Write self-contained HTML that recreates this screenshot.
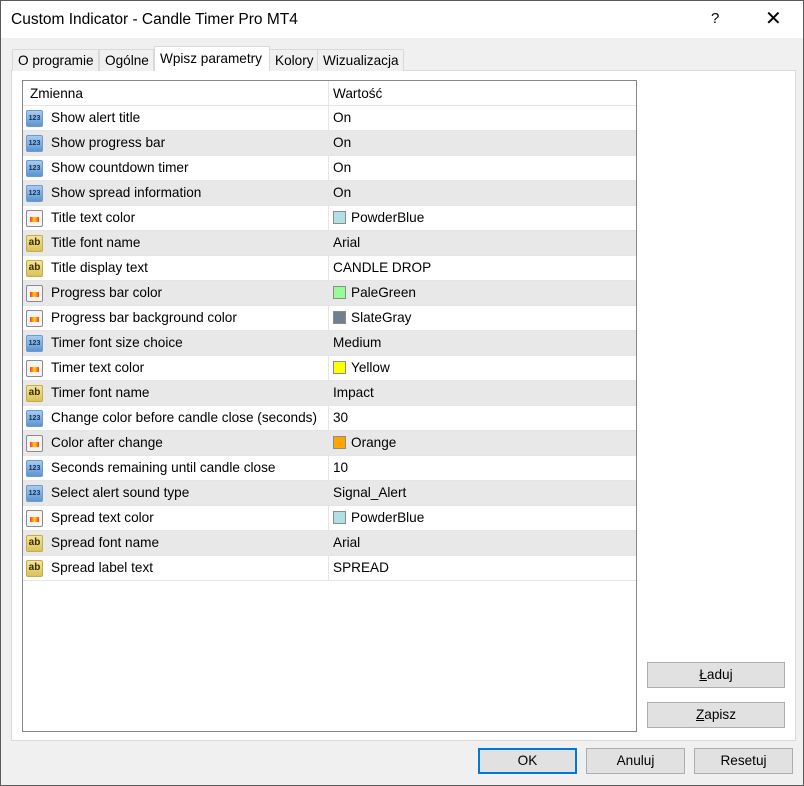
<!DOCTYPE html>
<html><head><meta charset="utf-8"><style>
*{box-sizing:border-box;margin:0;padding:0}
body{width:804px;height:786px;font-family:"Liberation Sans",Arial,sans-serif;font-size:13.6px;color:#000;background:#f0f0f0;position:relative;overflow:hidden}
.win{position:absolute;left:0;top:0;width:804px;height:786px;border:1px solid #5a5a5a;background:#f0f0f0}
.title{position:absolute;left:0;top:0;width:802px;height:37px;background:#fff}
.title .t{position:absolute;left:10px;top:10px;font-size:15.5px}
.title .q{position:absolute;left:710px;top:9px;font-size:15px}
.title .x{position:absolute;left:764px;top:5px;font-size:20px;font-weight:normal}
.tab{position:absolute;top:48px;height:22px;border:1px solid #d9d9d9;border-bottom:none;background:#f0f0f0;padding:3px 0 0 5px;font-size:13.6px}
.tab.sel{top:45px;height:25px;background:#fff;border-color:#d9d9d9;z-index:2;padding-top:4px}
.panel{position:absolute;left:10px;top:69px;width:785px;height:671px;background:#fff;border:1px solid #d9d9d9}
.list{position:absolute;left:21px;top:79px;width:615px;height:652px;border:1px solid #828790;background:#fff}
.hdr{position:absolute;left:0;top:0;width:613px;height:25px;border-bottom:1px solid #e5e5e5}
.hdr span{position:absolute;top:5px}
.vline{position:absolute;left:305px;top:0;width:1px;height:500px;background:#e5e5e5}
.row{position:absolute;left:0;width:613px;height:25px;border-bottom:1px solid #e5e5e5}
.row.g{background:#e8e8e8}
.row .nm{position:absolute;left:28px;top:4px}
.row .v{position:absolute;left:310px;top:4px}
.row .sw{display:inline-block;width:13px;height:13px;border:1px solid #8c8c8c;vertical-align:-2px;margin-right:5px}
.ic{position:absolute;left:3px;top:4px;width:17px;height:17px;border-radius:2px;font-size:7px;font-weight:bold;text-align:center;line-height:15px}
.ic.num{background:linear-gradient(#a8cbee,#5c95d0);border:1px solid #6b9bcf;color:#10305a}
.ic.ab{background:linear-gradient(#f3e59a,#d9c25a);border:1px solid #c4ad4a;color:#3a2a00;font-size:10px;line-height:14px}
.ic.col{background:#f4f4f4;border:1px solid #8c8c8c}
.ic.col:after{content:"";position:absolute;left:3px;top:6px;width:9px;height:5px;background:linear-gradient(90deg,#f33,#fd0 50%,#f33)}
.btn{position:absolute;height:26px;background:#e1e1e1;border:1px solid #adadad;text-align:center;line-height:24px;font-size:13.6px}
.btn.ok{border:2px solid #0078d7;line-height:22px}
</style></head><body><div class="win">
<div class="title"><span class="t">Custom Indicator - Candle Timer Pro MT4</span><span class="q">?</span><span class="x">✕</span></div>
<div class="panel"></div>
<div class="tab" style="left:11px;width:87px">O programie</div>
<div class="tab" style="left:98px;width:55px">Ogólne</div>
<div class="tab sel" style="left:153px;width:116px">Wpisz parametry</div>
<div class="tab" style="left:268px;width:49px">Kolory</div>
<div class="tab" style="left:316px;width:87px">Wizualizacja</div>
<div class="list">
<div class="hdr"><span style="left:7px">Zmienna</span><span style="left:310px">Wartość</span></div>
<div class="vline"></div>
<div class="row" style="top:25px"><span class="ic num">123</span><span class="nm">Show alert title</span><span class="v">On</span></div>
<div class="row g" style="top:50px"><span class="ic num">123</span><span class="nm">Show progress bar</span><span class="v">On</span></div>
<div class="row" style="top:75px"><span class="ic num">123</span><span class="nm">Show countdown timer</span><span class="v">On</span></div>
<div class="row g" style="top:100px"><span class="ic num">123</span><span class="nm">Show spread information</span><span class="v">On</span></div>
<div class="row" style="top:125px"><span class="ic col"></span><span class="nm">Title text color</span><span class="v"><span class="sw" style="background:#b0e0e6"></span>PowderBlue</span></div>
<div class="row g" style="top:150px"><span class="ic ab">ab</span><span class="nm">Title font name</span><span class="v">Arial</span></div>
<div class="row" style="top:175px"><span class="ic ab">ab</span><span class="nm">Title display text</span><span class="v">CANDLE DROP</span></div>
<div class="row g" style="top:200px"><span class="ic col"></span><span class="nm">Progress bar color</span><span class="v"><span class="sw" style="background:#98fb98"></span>PaleGreen</span></div>
<div class="row" style="top:225px"><span class="ic col"></span><span class="nm">Progress bar background color</span><span class="v"><span class="sw" style="background:#708090"></span>SlateGray</span></div>
<div class="row g" style="top:250px"><span class="ic num">123</span><span class="nm">Timer font size choice</span><span class="v">Medium</span></div>
<div class="row" style="top:275px"><span class="ic col"></span><span class="nm">Timer text color</span><span class="v"><span class="sw" style="background:#ffff00"></span>Yellow</span></div>
<div class="row g" style="top:300px"><span class="ic ab">ab</span><span class="nm">Timer font name</span><span class="v">Impact</span></div>
<div class="row" style="top:325px"><span class="ic num">123</span><span class="nm">Change color before candle close (seconds)</span><span class="v">30</span></div>
<div class="row g" style="top:350px"><span class="ic col"></span><span class="nm">Color after change</span><span class="v"><span class="sw" style="background:#ffa500"></span>Orange</span></div>
<div class="row" style="top:375px"><span class="ic num">123</span><span class="nm">Seconds remaining until candle close</span><span class="v">10</span></div>
<div class="row g" style="top:400px"><span class="ic num">123</span><span class="nm">Select alert sound type</span><span class="v">Signal_Alert</span></div>
<div class="row" style="top:425px"><span class="ic col"></span><span class="nm">Spread text color</span><span class="v"><span class="sw" style="background:#b0e0e6"></span>PowderBlue</span></div>
<div class="row g" style="top:450px"><span class="ic ab">ab</span><span class="nm">Spread font name</span><span class="v">Arial</span></div>
<div class="row" style="top:475px"><span class="ic ab">ab</span><span class="nm">Spread label text</span><span class="v">SPREAD</span></div>
</div>
<div class="btn" style="left:646px;top:661px;width:138px"><u>Ł</u>aduj</div>
<div class="btn" style="left:646px;top:701px;width:138px"><u>Z</u>apisz</div>
<div class="btn ok" style="left:477px;top:747px;width:99px">OK</div>
<div class="btn" style="left:585px;top:747px;width:99px">Anuluj</div>
<div class="btn" style="left:693px;top:747px;width:99px">Resetuj</div>
</div></body></html>
